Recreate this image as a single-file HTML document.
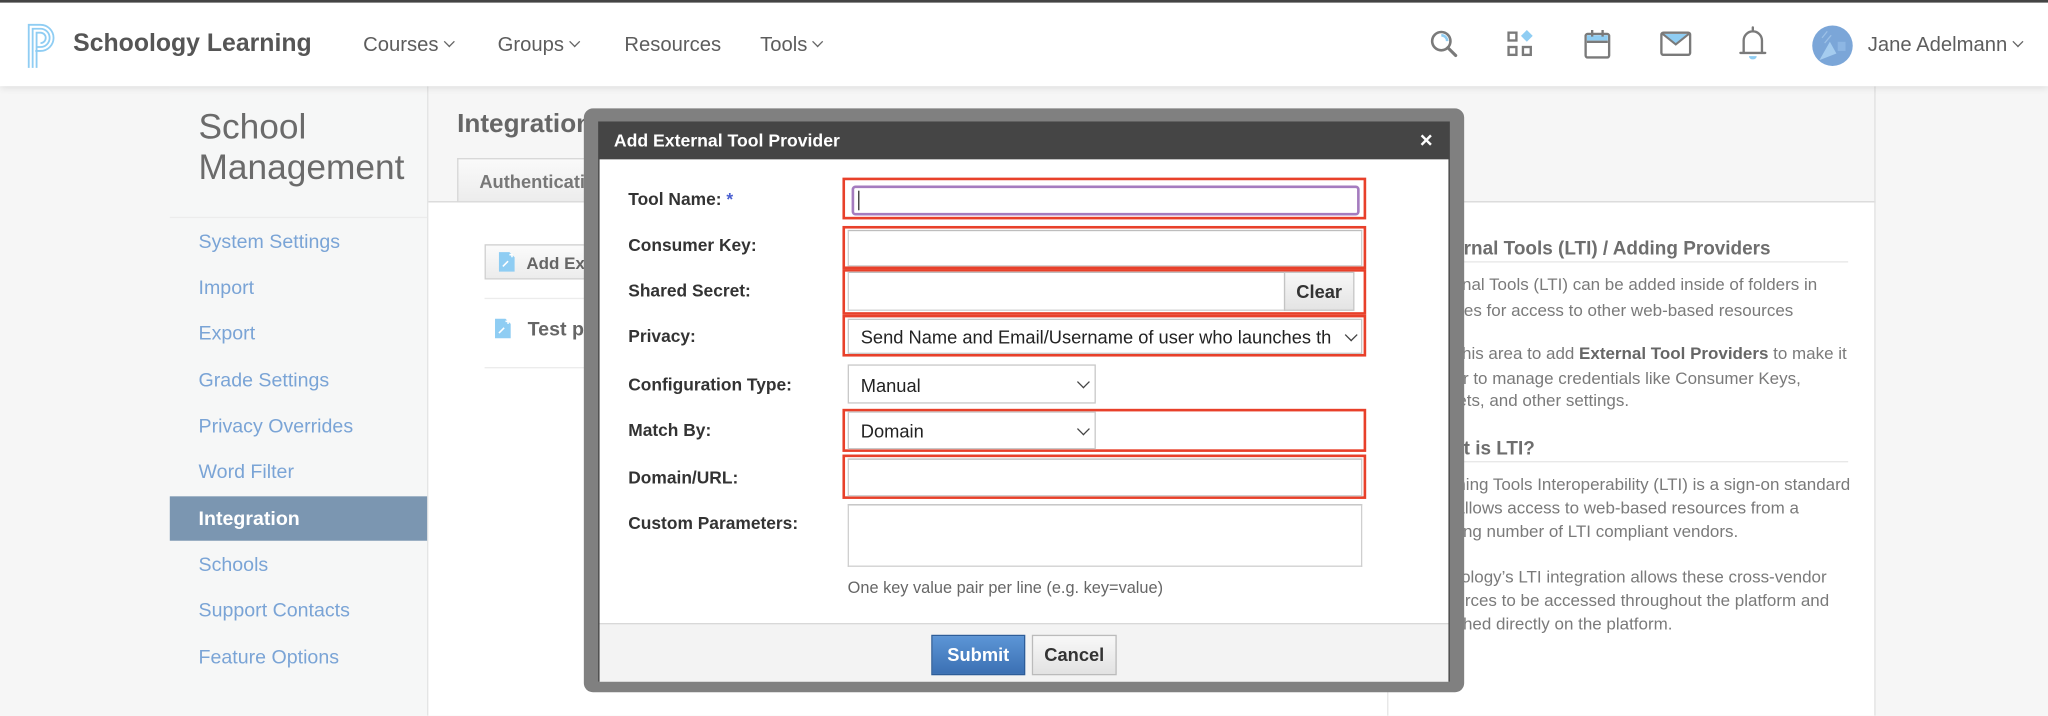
<!DOCTYPE html>
<html><head><meta charset="utf-8">
<style>
html,body{margin:0;padding:0;width:2048px;height:715px;overflow:hidden;background:#f7f7f7;}
#w{position:absolute;left:0;top:0;width:1568px;height:548px;transform:scale(1.30612);transform-origin:0 0;font-family:"Liberation Sans",Arial,sans-serif;background:#f6f6f6;overflow:hidden;}
.a{position:absolute;white-space:nowrap;}
.hdr{left:0;top:0;width:1568px;height:66px;background:#fff;border-top:2px solid #444;box-sizing:border-box;box-shadow:0 1px 6px rgba(0,0,0,.12);z-index:2;}
.nav{font-size:15.5px;color:#5d5d5d;top:24px;}
.chev{display:inline-block;width:5px;height:5px;border-right:1.3px solid #666;border-bottom:1.3px solid #666;transform:rotate(45deg);margin-left:5px;position:relative;top:-4px;}
.side{font-size:15px;color:#7aa4d6;left:152px;}
.rp{font-size:13px;color:#7a7a7a;left:1089px;}
.rh{font-size:14.5px;color:#6e6e6e;font-weight:bold;left:1090px;}
.lbl{font-size:13.3px;font-weight:bold;color:#333;left:481px;}
.red{border:2px solid #e8402a;box-sizing:border-box;}
.inp{background:#fff;border:1px solid #cfcfcf;border-top-color:#bdbdbd;box-sizing:border-box;}
.sel{background:#fff;border:1px solid #c8c8c8;box-sizing:border-box;font-size:14px;color:#222;}
.sv{display:inline-block;width:6px;height:6px;border-right:1.2px solid #444;border-bottom:1.2px solid #444;transform:rotate(45deg);position:absolute;}
</style></head><body>
<div id="w">
<div class="a hdr">
  <svg class="a" style="left:20px;top:15px" width="26" height="36" viewBox="0 0 26 36">
    <g fill="none" stroke="#8fcdf3" stroke-width="1.4">
      <path d="M2 35V2h9a10 10 0 0 1 0 20H7"/>
      <path d="M5 35V5h6a7 7 0 0 1 0 14H8"/>
      <path d="M8 35V8h3a4 4 0 0 1 0 8"/>
    </g>
  </svg>
  <div class="a" style="left:56px;top:21px;font-size:19px;font-weight:bold;color:#555">Schoology Learning</div>
  <div class="a nav" style="left:278px">Courses<span class="chev"></span></div>
  <div class="a nav" style="left:381px">Groups<span class="chev"></span></div>
  <div class="a nav" style="left:478px">Resources</div>
  <div class="a nav" style="left:582px">Tools<span class="chev"></span></div>
  <svg class="a" style="left:1094px;top:20px" width="24" height="24" viewBox="0 0 24 24"><circle cx="9.5" cy="9.5" r="7" fill="none" stroke="#7a7a7a" stroke-width="2"/><path d="M9.5 5a4.5 4.5 0 0 1 4.5 4.5" stroke="#8fcdf3" stroke-width="2" fill="none"/><path d="M14.5 14.5l6 6" stroke="#7a7a7a" stroke-width="2.4" stroke-linecap="round"/></svg>
  <svg class="a" style="left:1153px;top:20px" width="24" height="24" viewBox="0 0 24 24"><g fill="none" stroke="#7a7a7a" stroke-width="1.8"><rect x="2" y="3" width="6" height="6"/><rect x="2" y="14" width="6" height="6"/><rect x="13" y="14" width="6" height="6"/></g><path d="M16 1l4.5 4.5L16 10l-4.5-4.5z" fill="#8fcdf3"/></svg>
  <svg class="a" style="left:1211px;top:19px" width="24" height="26" viewBox="0 0 24 26"><rect x="3" y="5" width="18" height="18" rx="1.5" fill="none" stroke="#7a7a7a" stroke-width="1.8"/><rect x="4" y="6" width="16" height="4" fill="#8fcdf3"/><path d="M4 11h16M8 2v5M16 2v5" stroke="#7a7a7a" stroke-width="1.8"/></svg>
  <svg class="a" style="left:1270px;top:21px" width="26" height="22" viewBox="0 0 26 22"><rect x="2" y="2" width="22" height="17" rx="1.5" fill="none" stroke="#7a7a7a" stroke-width="1.8"/><path d="M3 3l10 8 10-8z" fill="#8fcdf3"/><path d="M3 3l10 8 10-8" fill="none" stroke="#7a7a7a" stroke-width="1.6"/></svg>
  <svg class="a" style="left:1330px;top:17px" width="24" height="28" viewBox="0 0 24 28"><path d="M12 2v2M5 21V12a7 7 0 0 1 14 0v9M2.5 21.5h19" fill="none" stroke="#7a7a7a" stroke-width="1.8" stroke-linecap="round"/><path d="M9 24a3 2.5 0 0 0 6 0z" fill="#8fcdf3"/></svg>
  <svg class="a" style="left:1387px;top:17px" width="32" height="32" viewBox="0 0 32 32"><circle cx="16" cy="16" r="15.5" fill="#7ba6d8"/><path d="M6 27l8-14 5 9z" fill="#a5ccef"/><rect x="20" y="13" width="6" height="7" fill="#8db6e3"/><path d="M8 10l4-5M10 14l5-6" stroke="#9cc0e6" stroke-width="1"/></svg>
  <div class="a nav" style="left:1430px">Jane Adelmann<span class="chev"></span></div>
</div>

<div class="a" style="left:130px;top:66px;width:197px;height:482px;background:#f6f7f7"></div>
<div class="a" style="left:327px;top:66px;width:1px;height:482px;background:#e3e3e3"></div>
<div class="a" style="left:152px;top:82px;font-size:27px;line-height:31px;color:#6b6b6b;">School<br>Management</div>
<div class="a" style="left:130px;top:166px;width:197px;height:1px;background:#ececec"></div>
<div class="a side" style="top:177px">System Settings</div>
<div class="a side" style="top:212px">Import</div>
<div class="a side" style="top:247px">Export</div>
<div class="a side" style="top:283px">Grade Settings</div>
<div class="a side" style="top:318px">Privacy Overrides</div>
<div class="a side" style="top:353px">Word Filter</div>
<div class="a" style="left:130px;top:380px;width:197px;height:34px;background:#7b96b1"></div>
<div class="a side" style="top:389px;color:#fff;font-weight:bold">Integration</div>
<div class="a side" style="top:424px">Schools</div>
<div class="a side" style="top:459px">Support Contacts</div>
<div class="a side" style="top:495px">Feature Options</div>

<div class="a" style="left:350px;top:84px;font-size:20px;font-weight:bold;color:#666">Integration</div>
<div class="a" style="left:350px;top:121px;width:120px;height:34px;border:1px solid #d6d6d6;border-bottom:none;background:linear-gradient(#fafafa,#ececec);box-sizing:border-box"></div>
<div class="a" style="left:367px;top:131px;font-size:14px;font-weight:bold;color:#777">Authentication</div>
<div class="a" style="left:328px;top:155px;width:1108px;height:393px;background:#fff"></div>
<div class="a" style="left:328px;top:154px;width:1108px;height:1px;background:#d8d8d8"></div>
<div class="a" style="left:1435px;top:66px;width:1px;height:482px;background:#e0e0e0"></div>
<div class="a" style="left:1062px;top:155px;width:1px;height:393px;background:#e6e6e6"></div>
<div class="a" style="left:371px;top:187px;width:120px;height:27px;border:1px solid #cfcfcf;background:linear-gradient(#fbfbfb,#ececec);box-sizing:border-box"></div>
<svg class="a" style="left:381px;top:192px" width="14" height="17" viewBox="0 0 14 17"><path d="M1 1h8l4 4v11H1z" fill="#8fcdf3"/><path d="M4 12l4-4M9 3h2v2" stroke="#fff" stroke-width="1.2" fill="none"/></svg>
<div class="a" style="left:403px;top:194px;font-size:13px;font-weight:bold;color:#666">Add External Tool</div>
<div class="a" style="left:371px;top:228px;width:690px;height:1px;background:#ececec"></div>
<svg class="a" style="left:378px;top:243px" width="14" height="17" viewBox="0 0 14 17"><path d="M1 1h8l4 4v11H1z" fill="#8fcdf3"/><path d="M4 12l4-4M9 3h2v2" stroke="#fff" stroke-width="1.2" fill="none"/></svg>
<div class="a" style="left:404px;top:244px;font-size:15px;font-weight:bold;color:#666">Test platform</div>
<div class="a" style="left:371px;top:281px;width:690px;height:1px;background:#ececec"></div>

<div class="a rh" style="top:183px">External Tools (LTI) / Adding Providers</div>
<div class="a" style="left:1080px;top:200px;width:335px;height:1px;background:#e6e6e6"></div>
<div class="a rp" style="top:210px">External Tools (LTI) can be added inside of folders in</div>
<div class="a rp" style="top:230px">courses for access to other web-based resources</div>
<div class="a rp" style="top:263px">Use this area to add <b style="color:#666">External Tool Providers</b> to make it</div>
<div class="a rp" style="top:282px">easier to manage credentials like Consumer Keys,</div>
<div class="a rp" style="top:299px">Secrets, and other settings.</div>
<div class="a rh" style="top:336px">What is LTI?</div>
<div class="a" style="left:1080px;top:353px;width:335px;height:1px;background:#e6e6e6"></div>
<div class="a rp" style="top:363px">Learning Tools Interoperability (LTI) is a sign-on standard</div>
<div class="a rp" style="top:381px">that allows access to web-based resources from a</div>
<div class="a rp" style="top:399px">growing number of LTI compliant vendors.</div>
<div class="a rp" style="top:434px">Schoology’s LTI integration allows these cross-vendor</div>
<div class="a rp" style="top:452px">resources to be accessed throughout the platform and</div>
<div class="a rp" style="top:470px">launched directly on the platform.</div>

<div class="a" style="left:447px;top:83px;width:674px;height:447px;background:#808080;border-radius:7px"></div>
<div class="a" style="left:458px;top:93px;width:652px;height:429px;background:#fff;border:1px solid #333;box-sizing:border-box"></div>
<div class="a" style="left:458px;top:93px;width:652px;height:29px;background:#454545"></div>
<div class="a" style="left:470px;top:100px;font-size:13.5px;font-weight:bold;color:#fff">Add External Tool Provider</div>
<div class="a" style="left:1087px;top:98px;font-size:17px;font-weight:bold;color:#fff">×</div>

<div class="a lbl" style="top:145px">Tool Name: <span style="color:#4a5fd0">*</span></div>
<div class="a lbl" style="top:180px">Consumer Key:</div>
<div class="a lbl" style="top:215px">Shared Secret:</div>
<div class="a lbl" style="top:250px">Privacy:</div>
<div class="a lbl" style="top:287px">Configuration Type:</div>
<div class="a lbl" style="top:322px">Match By:</div>
<div class="a lbl" style="top:358px">Domain/URL:</div>
<div class="a lbl" style="top:393px">Custom Parameters:</div>

<div class="a red" style="left:645px;top:136px;width:401px;height:32px"></div>
<div class="a" style="left:652px;top:142px;width:389px;height:23px;border:2px solid #a57cbf;border-radius:3px;box-sizing:border-box;background:#fff"></div>
<div class="a" style="left:657px;top:146px;width:1px;height:15px;background:#333"></div>
<div class="a red" style="left:645px;top:173px;width:401px;height:33px"></div>
<div class="a inp" style="left:649px;top:176px;width:394px;height:28px"></div>
<div class="a red" style="left:645px;top:206px;width:401px;height:35px"></div>
<div class="a inp" style="left:649px;top:208px;width:335px;height:30px"></div>
<div class="a" style="left:983px;top:208px;width:54px;height:30px;border:1px solid #c4c4c4;background:linear-gradient(#f7f7f7,#e4e4e4);box-sizing:border-box;font-size:14px;font-weight:bold;color:#333;text-align:center;line-height:28px">Clear</div>
<div class="a red" style="left:645px;top:241px;width:401px;height:32px"></div>
<div class="a sel" style="left:649px;top:244px;width:394px;height:27px"><span class="a" style="left:9px;top:5px">Send Name and Email/Username of user who launches th</span><span class="sv" style="left:381px;top:8px"></span></div>
<div class="a sel" style="left:649px;top:279px;width:190px;height:30px"><span class="a" style="left:9px;top:7px">Manual</span><span class="sv" style="left:176px;top:9px"></span></div>
<div class="a red" style="left:645px;top:313px;width:401px;height:33px"></div>
<div class="a sel" style="left:649px;top:315px;width:190px;height:29px"><span class="a" style="left:9px;top:6px">Domain</span><span class="sv" style="left:176px;top:9px"></span></div>
<div class="a red" style="left:645px;top:348px;width:401px;height:34px"></div>
<div class="a inp" style="left:649px;top:351px;width:394px;height:29px"></div>
<div class="a inp" style="left:649px;top:386px;width:394px;height:48px"></div>
<div class="a" style="left:649px;top:443px;font-size:12.5px;color:#666">One key value pair per line (e.g. key=value)</div>
<div class="a" style="left:459px;top:477px;width:650px;height:44px;background:#f3f3f3;border-top:1px solid #d8d8d8"></div>
<div class="a" style="left:713px;top:486px;width:72px;height:31px;background:linear-gradient(#5c95d6,#3b70b3);border:1px solid #2d5d99;box-sizing:border-box;color:#fff;font-size:14px;font-weight:bold;text-align:center;line-height:29px">Submit</div>
<div class="a" style="left:790px;top:486px;width:65px;height:31px;background:linear-gradient(#f8f8f8,#e2e2e2);border:1px solid #bbb;box-sizing:border-box;color:#333;font-size:14px;font-weight:bold;text-align:center;line-height:29px">Cancel</div>
</div>
</body></html>
